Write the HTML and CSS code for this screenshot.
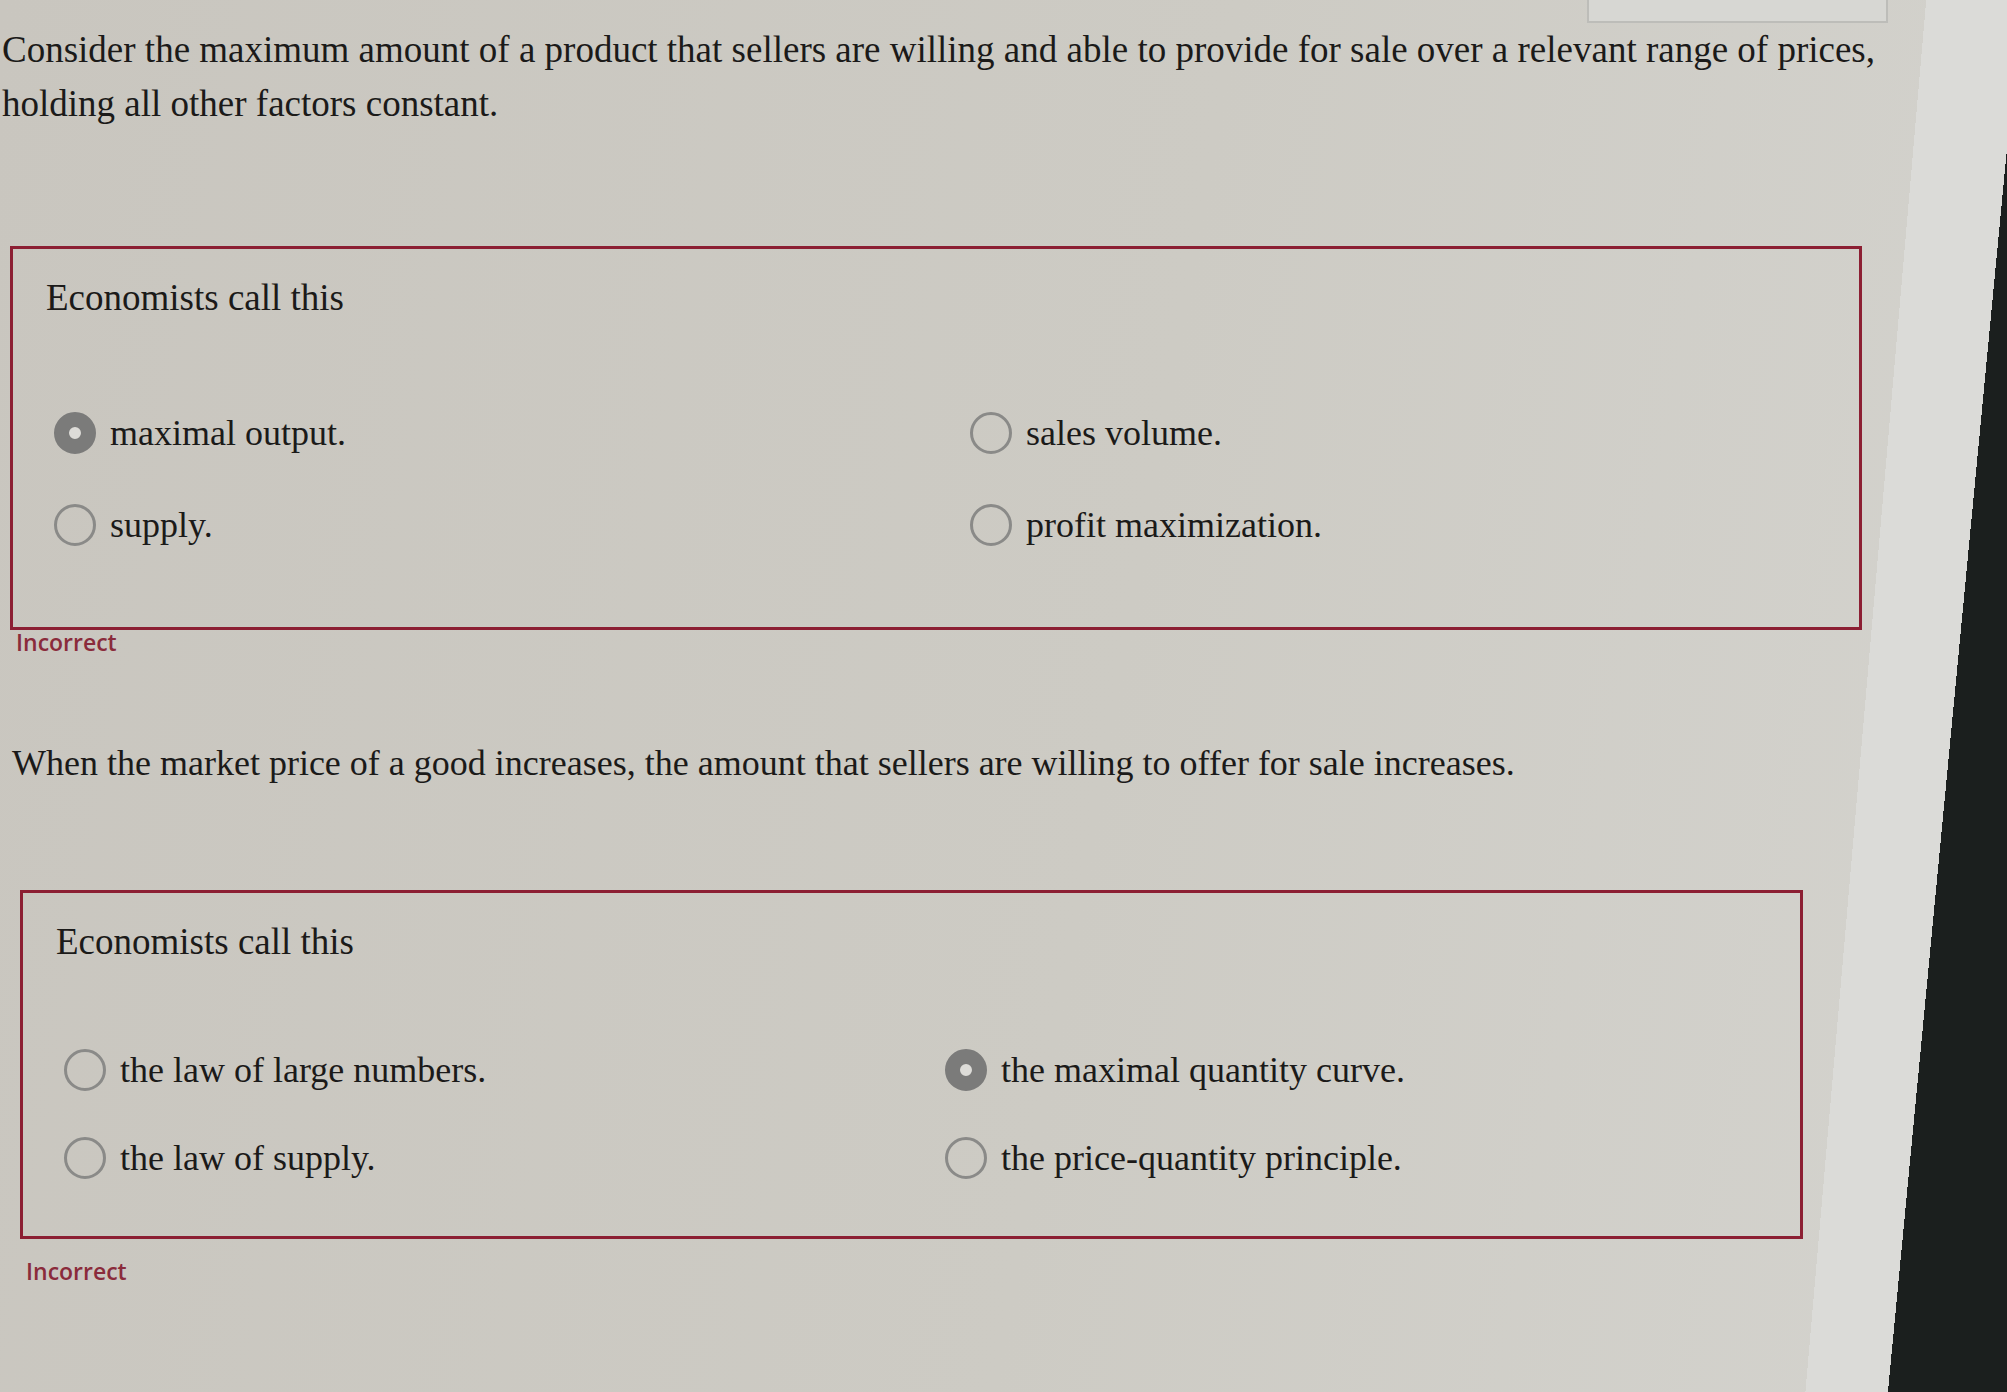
FILE: index.html
```html
<!DOCTYPE html>
<html lang="en">
<head>
    <meta charset="UTF-8">
    <title>Supply questions</title>
    <link rel="stylesheet" href="styles.css">
</head>
<body>
<div class="topbar"><div class="tab"></div></div>

<section class="item">
    <p class="prompt">Consider the maximum amount of a product that sellers are willing and able to provide for sale over a relevant range of prices, holding all other factors constant.</p>
    <div class="answer-box box-first">
        <p class="lead">Economists call this</p>
        <div class="choices">
            <label class="choice"><span class="radio on"></span>maximal output.</label>
            <label class="choice"><span class="radio"></span>sales volume.</label>
            <label class="choice"><span class="radio"></span>supply.</label>
            <label class="choice"><span class="radio"></span>profit maximization.</label>
        </div>
    </div>
    <p class="feedback">Incorrect</p>
</section>

<section class="item item-second">
    <p class="prompt">When the market price of a good increases, the amount that sellers are willing to offer for sale increases.</p>
    <div class="answer-box box-second">
        <p class="lead">Economists call this</p>
        <div class="choices">
            <label class="choice"><span class="radio"></span>the law of large numbers.</label>
            <label class="choice"><span class="radio on"></span>the maximal quantity curve.</label>
            <label class="choice"><span class="radio"></span>the law of supply.</label>
            <label class="choice"><span class="radio"></span>the price-quantity principle.</label>
        </div>
    </div>
    <p class="feedback">Incorrect</p>
</section>
</body>
</html>
```

FILE: styles.css
```css
html, body { margin:0; height:100%; }
body {
    font-family:"Liberation Serif", "Times New Roman", serif;
    color:#1b1a19;
    overflow:hidden;
    background:
        linear-gradient(95.47deg, transparent 2012px, #1b1f1e 2012px),
        linear-gradient(94.96deg, transparent 1919px, #dbdbd8 1919px),
        linear-gradient(100deg, #c9c6bf 0%, #cdcbc4 55%, #d4d3ce 100%);
}

/* cut off tab at the top right */
.topbar { height:23px; display:flex; justify-content:flex-end; padding-right:119px; }
.tab { width:301px; box-sizing:border-box; border:2px solid #bdbdb9; border-top:0; background:#d7d7d3; }

.item { padding-left:2px; }
.item-second { padding-left:12px; margin-top:82px; }

.prompt { margin:0; max-width:1900px; font-size:37px; line-height:54px; }
.item-second .prompt { font-size:36px; }

.answer-box { box-sizing:border-box; margin:115px 0 0 8px; border:3px solid #8c1f33; }
.box-first { width:1852px; height:384px; }
.box-second { width:1783px; height:349px; margin-top:100px; }

.lead { margin:0; padding:27px 0 0 33px; font-size:37px; line-height:44px; }

.choices { display:grid; grid-template-columns:50.75% 1fr; row-gap:44px; margin-top:84px; padding-left:41px; }
.box-first .choices { margin-top:91px; row-gap:48px; }
.choice { display:flex; align-items:center; gap:14px; font-size:36px; line-height:44px; }

.radio { flex:none; width:42px; height:42px; box-sizing:border-box; border-radius:50%; border:3px solid #8a8a88; }
.radio.on { border:15px solid #7b7b7a; background:#dddcd8; }

.feedback { margin:0 0 0 14px; font-family:"Open Sans", sans-serif; font-weight:600; font-size:23px; line-height:24px; color:#8a2b3b; }
.item-second .feedback { margin-top:20px; }
```
